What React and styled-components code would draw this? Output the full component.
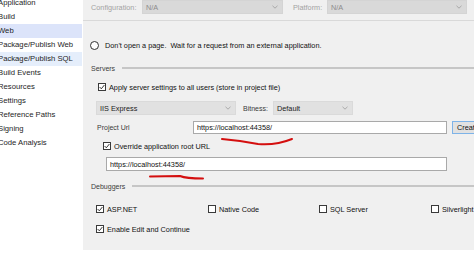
import React from "react";
import styled, { createGlobalStyle } from "styled-components";

const Global = createGlobalStyle`
  html, body { margin: 0; padding: 0; background: #ffffff; }
  body { font-family: "Liberation Sans", Arial, sans-serif; }
`;

const Page = styled.div`
  position: relative;
  width: 474px;
  height: 253px;
  overflow: hidden;
  display: flex;
  background: #ffffff;
`;

const Sidebar = styled.nav`
  width: 83px;
  flex: none;
  display: flex;
  flex-direction: column;
  margin-top: -4px;
`;

const NavItem = styled.div`
  width: 82px;
  height: 14px;
  line-height: 14px;
  padding-left: 0;
  text-indent: -2px;
  font-size: 7.7px;
  color: #1e1e1e;
  white-space: nowrap;
  overflow: hidden;
  background: ${(p) => (p.$state === "active" ? "#dce4fa" : p.$state === "hover" ? "#e5eefb" : "transparent")};
`;

const Panel = styled.main`
  width: 430px;
  flex: none;
  height: 250px;
  background: #f0f0f0;
  display: flex;
  flex-direction: column;
  font-size: 7.3px;
  color: #111;
`;

const Toolbar = styled.div`
  height: 20px;
  border-bottom: 1px solid #d9d9d9;
  display: flex;
  align-items: flex-start;
  padding-left: 8px;
`;

const BarLabel = styled.span`
  width: ${(p) => p.$w}px;
  flex: none;
  height: 15px;
  line-height: 16px;
  color: #a3a3a3;
  white-space: nowrap;
`;

const Combo = styled.div`
  width: ${(p) => p.$w}px;
  height: ${(p) => p.$h || 14}px;
  flex: none;
  box-sizing: border-box;
  display: flex;
  align-items: center;
  justify-content: space-between;
  padding: 0 4px 0 3px;
  background: ${(p) => (p.$disabled ? "#d9d9d9" : "#e1e1e1")};
  border: 1px solid ${(p) => (p.$disabled ? "#d4d4d4" : "#dadada")};
  color: ${(p) => (p.$disabled ? "#8c8c8c" : "#222")};
  margin-right: ${(p) => p.$mr || 0}px;
  white-space: nowrap;
`;

const Chevron = () => (
  <svg width="6" height="4" viewBox="0 0 6 4">
    <path d="M0.5 0.8 L3 3.2 L5.5 0.8" fill="none" stroke="#9a9a9a" strokeWidth="0.8" />
  </svg>
);

const Row = styled.div`
  display: flex;
  align-items: center;
  height: ${(p) => p.$h}px;
  margin-top: ${(p) => p.$top}px;
  padding-left: ${(p) => p.$indent}px;
  white-space: pre;
`;

const Radio = styled.span`
  width: 9px;
  height: 9px;
  box-sizing: border-box;
  border: 1px solid #333;
  border-radius: 50%;
  background: #fff;
  margin-right: 6px;
  flex: none;
`;

const Box = styled.span`
  width: 8px;
  height: 8px;
  box-sizing: border-box;
  border: 1px solid #3a3a3a;
  background: #fff;
  margin-right: 3px;
  flex: none;
  display: flex;
  align-items: center;
  justify-content: center;
`;

const Check = ({ checked }) => (
  <Box>
    {checked && (
      <svg width="6" height="6" viewBox="0 0 6 6">
        <path d="M0.6 3 L2.3 4.8 L5.4 1" fill="none" stroke="#222" strokeWidth="0.9" />
      </svg>
    )}
  </Box>
);

const CheckItem = styled.label`
  display: flex;
  align-items: center;
  width: ${(p) => (p.$w ? `${p.$w}px` : "auto")};
  flex: none;
`;

const SectionHead = styled.div`
  display: flex;
  align-items: center;
  height: 10px;
  margin-top: ${(p) => p.$top}px;
  padding-left: 8px;
  color: #3c3c3c;
  font-size: 7px;
`;

const SectionTitle = styled.span`
  width: ${(p) => p.$w}px;
  flex: none;
`;

const Rule = styled.span`
  flex: 1;
  height: 2px;
  background: #c6c6c6;
`;

const FieldLabel = styled.span`
  width: ${(p) => p.$w}px;
  flex: none;
  color: #3a3a3a;
  font-size: 7px;
`;

const TextInput = styled.div`
  width: ${(p) => p.$w}px;
  height: ${(p) => p.$h}px;
  flex: none;
  box-sizing: border-box;
  background: #ffffff;
  border: 1px solid #a9a9a9;
  display: flex;
  align-items: center;
  padding-left: 3px;
  color: #111;
`;

const Button = styled.div`
  height: 13px;
  flex: none;
  box-sizing: border-box;
  margin-left: 5px;
  padding: 0 4px;
  background: #e1e1e1;
  border: 1px solid #7db3e8;
  display: flex;
  align-items: center;
  color: #111;
`;

const Grid = styled.div`
  display: grid;
  grid-template-columns: 112px 111px 112px 112px;
  align-items: center;
  height: 10px;
  margin-top: ${(p) => p.$top}px;
  padding-left: 13px;
`;

const Ink = styled.svg`
  position: absolute;
  left: 0;
  top: 0;
  pointer-events: none;
`;

const navItems = [
  ["Application"],
  ["Build"],
  ["Web", "active"],
  ["Package/Publish Web"],
  ["Package/Publish SQL", "hover"],
  ["Build Events"],
  ["Resources"],
  ["Settings"],
  ["Reference Paths"],
  ["Signing"],
  ["Code Analysis"],
];

const debuggers = [
  ["ASP.NET", true],
  ["Native Code", false],
  ["SQL Server", false],
  ["Silverlight", false],
];

export default function App() {
  return (
    <>
      <Global />
      <Page>
        <Sidebar>
          {navItems.map(([label, state]) => (
            <NavItem key={label} $state={state}>
              {label}
            </NavItem>
          ))}
        </Sidebar>
        <Panel>
          <Toolbar>
            <BarLabel $w={51}>Configuration:</BarLabel>
            <Combo $w={141} $mr={10} $disabled>
              <span>N/A</span>
              <Chevron />
            </Combo>
            <BarLabel $w={34}>Platform:</BarLabel>
            <Combo $w={140} $disabled>
              <span>N/A</span>
              <Chevron />
            </Combo>
          </Toolbar>

          <Row $h={10} $top={19} $indent={7}>
            <Radio />
            <span>{"Don't open a page.  Wait for a request from an external application."}</span>
          </Row>

          <SectionHead $top={13}>
            <SectionTitle $w={31}>Servers</SectionTitle>
            <Rule />
          </SectionHead>

          <Row $h={10} $top={9} $indent={15}>
            <CheckItem>
              <Check checked />
              <span>Apply server settings to all users (store in project file)</span>
            </CheckItem>
          </Row>

          <Row $h={14} $top={9} $indent={13}>
            <Combo $w={140} $mr={7}>
              <span>IIS Express</span>
              <Chevron />
            </Combo>
            <FieldLabel $w={30}>Bitness:</FieldLabel>
            <Combo $w={80}>
              <span>Default</span>
              <Chevron />
            </Combo>
          </Row>

          <Row $h={13} $top={6} $indent={14}>
            <FieldLabel $w={96}>Project Url</FieldLabel>
            <TextInput $w={254} $h={13}>https://localhost:44358/</TextInput>
            <Button>Create Virtual Directory</Button>
          </Row>

          <Row $h={10} $top={7} $indent={20}>
            <CheckItem>
              <Check checked />
              <span>Override application root URL</span>
            </CheckItem>
          </Row>

          <Row $h={14} $top={6} $indent={23}>
            <TextInput $w={341} $h={14}>https://localhost:44358/</TextInput>
          </Row>

          <SectionHead $top={10}>
            <SectionTitle $w={41}>Debuggers</SectionTitle>
            <Rule />
          </SectionHead>

          <Grid $top={13}>
            {debuggers.map(([label, checked]) => (
              <CheckItem key={label}>
                <Check checked={checked} />
                <span>{label}</span>
              </CheckItem>
            ))}
          </Grid>

          <Row $h={10} $top={10} $indent={13}>
            <CheckItem>
              <Check checked />
              <span>Enable Edit and Continue</span>
            </CheckItem>
          </Row>
        </Panel>

        <Ink width="474" height="253" viewBox="0 0 474 253">
          <path
            d="M222 139 Q240 140.5 258 144 Q276 145.5 292 139"
            fill="none"
            stroke="#d40f0f"
            strokeWidth="2"
            strokeLinecap="round"
          />
          <path
            d="M150 176.5 L180 176 Q186 178.5 203 178.5"
            fill="none"
            stroke="#d40f0f"
            strokeWidth="2"
            strokeLinecap="round"
          />
        </Ink>
      </Page>
    </>
  );
}
